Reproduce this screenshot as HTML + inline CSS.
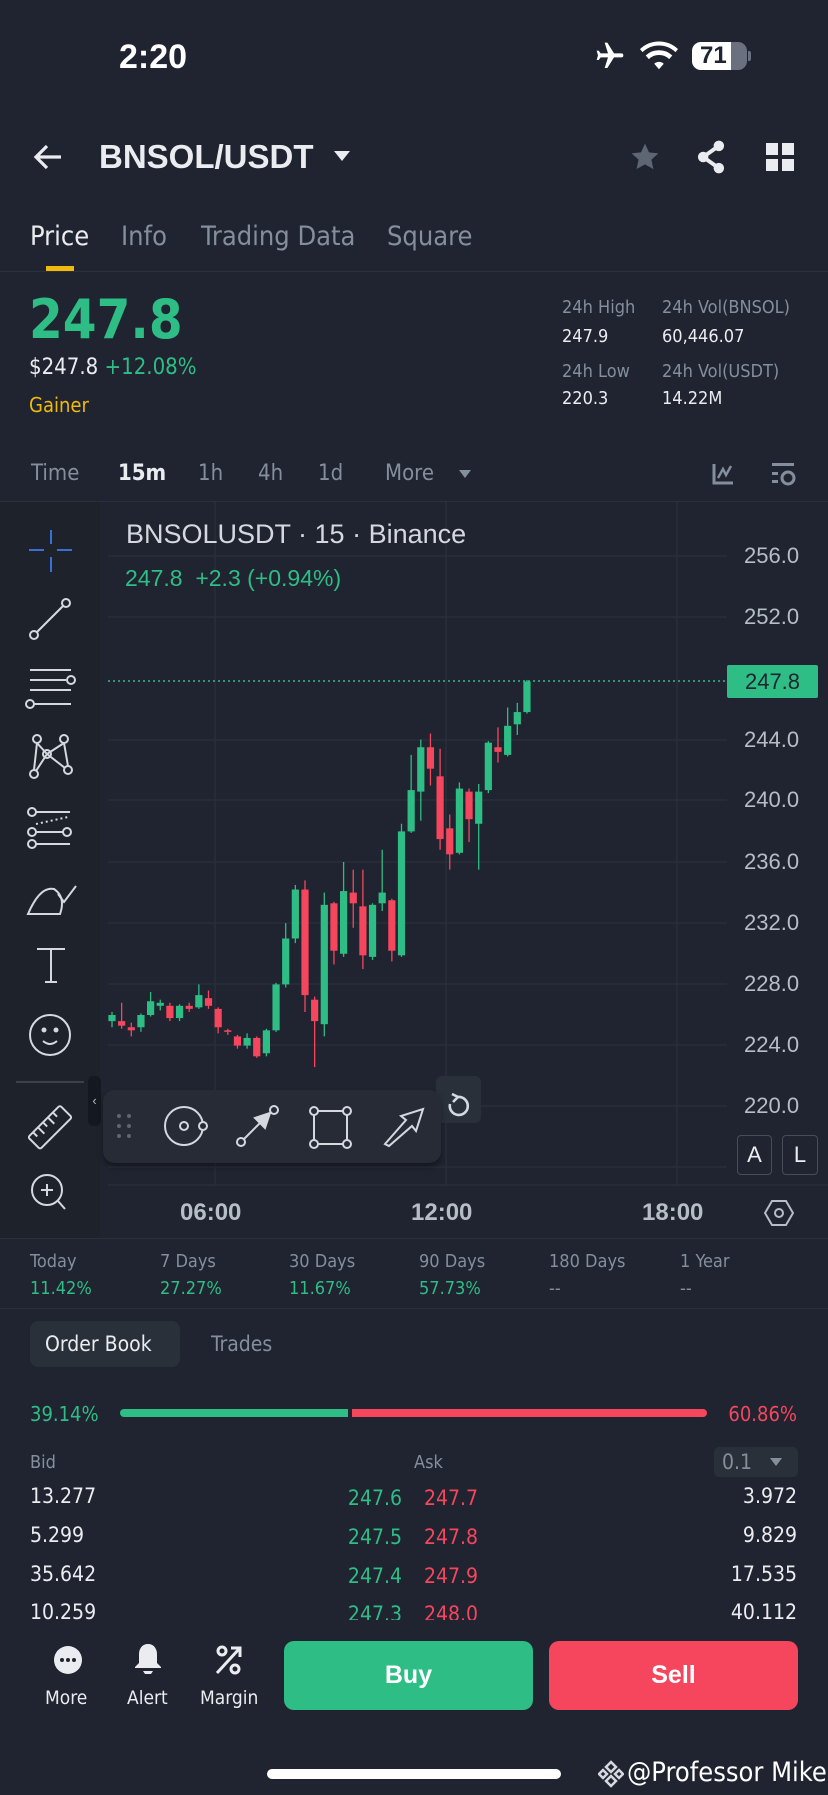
<!DOCTYPE html>
<html><head><meta charset="utf-8">
<style>
*{margin:0;padding:0;box-sizing:border-box}
body{width:828px;height:1795px;background:#1f2430;font-family:"Liberation Sans",sans-serif;color:#eaecef;position:relative;overflow:hidden}
.a{position:absolute;white-space:nowrap}
.g{color:#2ebd85}.r{color:#f6465d}.m{color:#848e9c}
.cond{font-family:"DejaVu Sans Condensed","Liberation Sans Narrow","Liberation Sans",sans-serif}
</style></head><body>
<!-- status -->
<div class="a" style="left:119px;top:38px;font-size:34px;font-weight:600;color:#fff">2:20</div>
<svg class="a" style="left:590px;top:40px" width="40" height="32" viewBox="0 0 24 24"><path fill="#fff" d="M21 16v-2l-8-5V3.5A1.5 1.5 0 0 0 11.5 2 1.5 1.5 0 0 0 10 3.5V9l-8 5v2l8-2.5V19l-2 1.5V22l3.5-1 3.5 1v-1.5L13 19v-5.5z" transform="rotate(90 12 12)"/></svg>
<svg class="a" style="left:640px;top:40px" width="38" height="30" viewBox="0 0 24 18"><path fill="#fff" d="M12 18l3-3.5a4.5 4.5 0 0 0-6 0zM12 9a9 9 0 0 1 6.4 2.6l2-2.3A12 12 0 0 0 12 6a12 12 0 0 0-8.4 3.3l2 2.3A9 9 0 0 1 12 9zM12 3a15 15 0 0 1 10.4 4.2l1.6-1.9A17.5 17.5 0 0 0 12 .5 17.5 17.5 0 0 0 0 5.3l1.6 1.9A15 15 0 0 1 12 3z"/></svg>
<div class="a" style="left:692px;top:42px;width:55px;height:28px;border-radius:9px;background:#6b7080;overflow:hidden"><div style="width:39px;height:28px;background:#fff"></div></div>
<div class="a" style="left:748px;top:51px;width:3px;height:10px;background:#6b7080;border-radius:0 2px 2px 0"></div>
<div class="a" style="left:700px;top:42px;font-size:24px;font-weight:700;color:#1f2430;line-height:28px">71</div>
<!-- header -->
<svg class="a" style="left:32px;top:142px" width="32" height="30" viewBox="0 0 32 30"><path d="M29 15H5M15 4L4 15l11 11" stroke="#eaecef" stroke-width="3.2" fill="none"/></svg>
<div class="a" style="left:99px;top:138px;font-size:33px;font-weight:700">BNSOL/USDT</div>
<div class="a" style="left:334px;top:151px;width:0;height:0;border-left:8px solid transparent;border-right:8px solid transparent;border-top:10px solid #eaecef"></div>
<svg class="a" style="left:629px;top:141px" width="32" height="32" viewBox="0 0 24 24"><path fill="#5e6673" d="M12 2l3 6.5 7 .8-5.2 4.8 1.5 7L12 17.5 5.7 21l1.5-7L2 9.3l7-.8z"/></svg>
<svg class="a" style="left:695px;top:140px" width="32" height="34" viewBox="0 0 24 26"><circle cx="18" cy="4.5" r="4" fill="#eaecef"/><circle cx="6" cy="13" r="4" fill="#eaecef"/><circle cx="18" cy="21.5" r="4" fill="#eaecef"/><path d="M18 4.5L6 13l12 8.5" stroke="#eaecef" stroke-width="3" fill="none"/></svg>
<svg class="a" style="left:766px;top:143px" width="28" height="28" viewBox="0 0 28 28"><g fill="#eaecef"><rect x="0" y="0" width="12" height="12"/><rect x="16" y="0" width="12" height="12"/><rect x="0" y="16" width="12" height="12"/><rect x="16" y="16" width="12" height="12"/></g></svg>
<!-- tabs -->
<div class="a cond" style="left:30px;top:221px;font-size:27px;color:#eaecef">Price</div>
<div class="a cond m" style="left:121px;top:221px;font-size:27px">Info</div>
<div class="a cond m" style="left:201px;top:221px;font-size:27px">Trading Data</div>
<div class="a cond m" style="left:387px;top:221px;font-size:27px">Square</div>
<div class="a" style="left:46px;top:266px;width:28px;height:5px;background:#f0b90b"></div>
<div class="a" style="left:0;top:271px;width:828px;height:1px;background:#2b313b"></div>
<!-- price -->
<div class="a cond g" style="left:29px;top:288px;font-size:54px;font-weight:700">247.8</div>
<div class="a cond" style="left:29px;top:355px;font-size:22px">$247.8 <span class="g">+12.08%</span></div>
<div class="a cond" style="left:29px;top:393px;font-size:20px;color:#f0b90b">Gainer</div>
<div class="a cond m" style="left:562px;top:297px;font-size:18px">24h High</div>
<div class="a cond" style="left:562px;top:326px;font-size:18px">247.9</div>
<div class="a cond m" style="left:562px;top:361px;font-size:18px">24h Low</div>
<div class="a cond" style="left:562px;top:388px;font-size:18px">220.3</div>
<div class="a cond m" style="left:662px;top:297px;font-size:18px">24h Vol(BNSOL)</div>
<div class="a cond" style="left:662px;top:326px;font-size:18px">60,446.07</div>
<div class="a cond m" style="left:662px;top:361px;font-size:18px">24h Vol(USDT)</div>
<div class="a cond" style="left:662px;top:388px;font-size:18px">14.22M</div>
<!-- intervals -->
<div class="a cond m" style="left:31px;top:461px;font-size:22px">Time</div>
<div class="a cond" style="left:118px;top:461px;font-size:22px;font-weight:700">15m</div>
<div class="a cond m" style="left:198px;top:461px;font-size:22px">1h</div>
<div class="a cond m" style="left:258px;top:461px;font-size:22px">4h</div>
<div class="a cond m" style="left:318px;top:461px;font-size:22px">1d</div>
<div class="a cond m" style="left:385px;top:461px;font-size:22px">More</div>
<div class="a" style="left:459px;top:470px;border-left:6px solid transparent;border-right:6px solid transparent;border-top:8px solid #848e9c"></div>
<svg class="a" style="left:712px;top:463px" width="22" height="22" viewBox="0 0 22 22"><path d="M2 1v19h19" stroke="#848e9c" stroke-width="3" fill="none"/><path d="M6 15l5-9 3 6 5-9" stroke="#848e9c" stroke-width="2.4" fill="none"/></svg>
<svg class="a" style="left:770px;top:463px" width="26" height="24" viewBox="0 0 26 24"><g fill="#848e9c"><rect x="2" y="0" width="22" height="3"/><rect x="2" y="9" width="6" height="3"/><rect x="2" y="17" width="6" height="3"/></g><circle cx="18" cy="15" r="6" stroke="#848e9c" stroke-width="3" fill="none"/></svg>
<div class="a" style="left:0;top:501px;width:828px;height:1px;background:#2b313b"></div>
<!-- chart -->
<div class="a" style="left:0;top:502px;width:100px;height:736px;background:#1d222b"></div>
<svg class="a" style="left:0;top:502px" width="828" height="736" id="ch">
<g stroke="#2b313b" stroke-width="1.2">
<line x1="215" y1="0" x2="215" y2="683"/><line x1="446" y1="0" x2="446" y2="683"/><line x1="677" y1="0" x2="677" y2="683"/>
<line x1="108" y1="54" x2="727" y2="54"/><line x1="108" y1="115" x2="727" y2="115"/><line x1="108" y1="238" x2="727" y2="238"/><line x1="108" y1="298" x2="727" y2="298"/><line x1="108" y1="360" x2="727" y2="360"/><line x1="108" y1="421" x2="727" y2="421"/><line x1="108" y1="482" x2="727" y2="482"/><line x1="108" y1="543" x2="727" y2="543"/><line x1="108" y1="604" x2="727" y2="604"/><line x1="108" y1="665" x2="727" y2="665"/>
<line x1="108" y1="683" x2="828" y2="683"/>
</g>
<line x1="108" y1="179" x2="727" y2="179" stroke="#2ebd85" stroke-width="1.5" stroke-dasharray="2 3"/>
<g id="cd"></g>
</svg>
<div class="a" style="left:126px;top:519px;font-size:27px;color:#d5d9df">BNSOLUSDT · 15 · Binance</div>
<div class="a g" style="left:125px;top:565px;font-size:23px">247.8&nbsp; +2.3 (+0.94%)</div>
<div class="a" style="left:744px;top:543px;font-size:22px;color:#b7bdc6;line-height:26px">256.0</div>
<div class="a" style="left:744px;top:604px;font-size:22px;color:#b7bdc6;line-height:26px">252.0</div>
<div class="a" style="left:744px;top:727px;font-size:22px;color:#b7bdc6;line-height:26px">244.0</div>
<div class="a" style="left:744px;top:787px;font-size:22px;color:#b7bdc6;line-height:26px">240.0</div>
<div class="a" style="left:744px;top:849px;font-size:22px;color:#b7bdc6;line-height:26px">236.0</div>
<div class="a" style="left:744px;top:910px;font-size:22px;color:#b7bdc6;line-height:26px">232.0</div>
<div class="a" style="left:744px;top:971px;font-size:22px;color:#b7bdc6;line-height:26px">228.0</div>
<div class="a" style="left:744px;top:1032px;font-size:22px;color:#b7bdc6;line-height:26px">224.0</div>
<div class="a" style="left:744px;top:1093px;font-size:22px;color:#b7bdc6;line-height:26px">220.0</div>
<div class="a" style="left:727px;top:665px;width:91px;height:33px;background:#2ebd85;border-radius:2px;font-size:22px;color:#1f2430;line-height:33px;text-align:center">247.8</div>
<div class="a" style="left:737px;top:1135px;width:35px;height:40px;border:1px solid #474d57;border-radius:4px;font-size:22px;color:#eaecef;line-height:38px;text-align:center">A</div>
<div class="a" style="left:782px;top:1135px;width:36px;height:40px;border:1px solid #474d57;border-radius:4px;font-size:22px;color:#eaecef;line-height:38px;text-align:center">L</div>
<!-- left tools -->
<svg class="a" style="left:0;top:502px" width="100" height="736" fill="none" stroke="#d5d9df" stroke-width="2">
<g stroke="#3b6fd8"><line x1="29" y1="48" x2="44" y2="48"/><line x1="57" y1="48" x2="72" y2="48"/><line x1="51" y1="28" x2="51" y2="42"/><line x1="51" y1="55" x2="51" y2="70"/></g>
<circle cx="34" cy="133" r="4"/><circle cx="66" cy="101" r="4"/><line x1="37" y1="130" x2="63" y2="104"/>
<line x1="30" y1="168" x2="71" y2="168"/><line x1="30" y1="178" x2="66" y2="178"/><circle cx="71" cy="178" r="4"/><line x1="30" y1="188" x2="71" y2="188"/><line x1="34" y1="202" x2="71" y2="202"/><circle cx="30" cy="202" r="4"/>
<circle cx="37" cy="237" r="4"/><circle cx="64" cy="237" r="4"/><circle cx="47" cy="252" r="4"/><circle cx="34" cy="272" r="4"/><circle cx="68" cy="268" r="4"/><path d="M37 241L34 268M37 241L47 252M47 252L64 241M64 241L68 264M47 252L36 269M47 252L65 266"/>
<circle cx="32" cy="310" r="4"/><line x1="36" y1="310" x2="70" y2="310"/><path d="M36 322L68 315" stroke-dasharray="2 3"/><circle cx="32" cy="330" r="4"/><circle cx="67" cy="330" r="4"/><line x1="36" y1="330" x2="63" y2="330"/><circle cx="32" cy="342" r="4"/><line x1="36" y1="342" x2="70" y2="342"/>
<path d="M28 412L60 412Q66 395 54 387Q40 384 28 412Z"/><path d="M58 392L64 400L76 384"/>
<path d="M37 447H65M51 447V480M45 480H57"/>
<circle cx="50" cy="533" r="20"/><circle cx="44" cy="528" r="1.5" fill="#d5d9df"/><circle cx="56" cy="528" r="1.5" fill="#d5d9df"/><path d="M43 539Q50 545 57 539"/>
<line x1="16" y1="580" x2="84" y2="580" stroke="#3b414b"/>
<g transform="rotate(-45 50 626)"><rect x="28" y="617" width="45" height="17" rx="2"/><path d="M35 617v6M42 617v9M49 617v6M56 617v9M63 617v6"/></g>
<circle cx="47" cy="688" r="15"/><path d="M41 688h12M47 682v12M58 699l7 8"/>
</svg>
<!-- drawing popup -->
<div class="a" style="left:88px;top:1076px;width:13px;height:50px;background:#141820;border-radius:6px;color:#b7bdc6;font-size:13px;line-height:50px;text-align:center">‹</div>
<div class="a" style="left:436px;top:1076px;width:45px;height:47px;background:#2a303a;border-radius:6px"></div>
<div class="a" style="left:103px;top:1090px;width:338px;height:73px;background:#262b35;border-radius:12px;box-shadow:0 4px 6px rgba(0,0,0,.35)"></div>
<svg class="a" style="left:103px;top:1076px" width="380" height="90" fill="none" stroke="#d5d9df" stroke-width="2">
<g fill="#5e6673" stroke="none"><circle cx="16" cy="40" r="2"/><circle cx="26" cy="40" r="2"/><circle cx="16" cy="50" r="2"/><circle cx="26" cy="50" r="2"/><circle cx="16" cy="60" r="2"/><circle cx="26" cy="60" r="2"/></g>
<circle cx="81" cy="50" r="19"/><circle cx="81" cy="50" r="4"/><circle cx="100" cy="50" r="4" fill="#262b35"/>
<circle cx="138" cy="66" r="4"/><circle cx="171" cy="34" r="4"/><line x1="141" y1="63" x2="164" y2="40"/><path d="M152 42L167 37L162 52Z" fill="#d5d9df"/>
<rect x="211" y="35" width="33" height="33"/><circle cx="211" cy="35" r="4" fill="#262b35"/><circle cx="244" cy="35" r="4" fill="#262b35"/><circle cx="211" cy="68" r="4" fill="#262b35"/><circle cx="244" cy="68" r="4" fill="#262b35"/>
<path d="M282 68L303 44L298 40L320 33L313 55L309 50L286 70Z"/>
<path d="M355 21A9 9 0 1 1 347 28" stroke-width="2.6"/><path d="M349 18L355 21L350 26" stroke-width="2.6"/>
</svg>
<!-- time axis -->
<div class="a" style="left:180px;top:1199px;font-size:24px;font-weight:700;color:#b7bdc6">06:00</div>
<div class="a" style="left:411px;top:1199px;font-size:24px;font-weight:700;color:#b7bdc6">12:00</div>
<div class="a" style="left:642px;top:1199px;font-size:24px;font-weight:700;color:#b7bdc6">18:00</div>
<svg class="a" style="left:764px;top:1199px" width="30" height="28" viewBox="0 0 30 28" fill="none" stroke="#b7bdc6" stroke-width="2"><path d="M8 2h14l7 12-7 12H8L1 14z"/><circle cx="15" cy="14" r="4"/></svg>
<div class="a" style="left:0;top:1238px;width:828px;height:1px;background:#2b313b"></div>
<!-- performance -->
<div class="a cond m" style="left:30px;top:1251px;font-size:18px">Today</div>
<div class="a cond g" style="left:30px;top:1278px;font-size:18px">11.42%</div>
<div class="a cond m" style="left:160px;top:1251px;font-size:18px">7 Days</div>
<div class="a cond g" style="left:160px;top:1278px;font-size:18px">27.27%</div>
<div class="a cond m" style="left:289px;top:1251px;font-size:18px">30 Days</div>
<div class="a cond g" style="left:289px;top:1278px;font-size:18px">11.67%</div>
<div class="a cond m" style="left:419px;top:1251px;font-size:18px">90 Days</div>
<div class="a cond g" style="left:419px;top:1278px;font-size:18px">57.73%</div>
<div class="a cond m" style="left:549px;top:1251px;font-size:18px">180 Days</div>
<div class="a cond m" style="left:549px;top:1278px;font-size:18px">--</div>
<div class="a cond m" style="left:680px;top:1251px;font-size:18px">1 Year</div>
<div class="a cond m" style="left:680px;top:1278px;font-size:18px">--</div>
<div class="a" style="left:0;top:1308px;width:828px;height:1px;background:#2b313b"></div>
<!-- order book -->
<div class="a" style="left:30px;top:1321px;width:150px;height:46px;background:#2a303a;border-radius:8px"></div>
<div class="a cond" style="left:45px;top:1332px;font-size:21px">Order Book</div>
<div class="a cond m" style="left:211px;top:1332px;font-size:21px">Trades</div>
<div class="a cond g" style="left:30px;top:1402px;font-size:20px">39.14%</div>
<div class="a" style="left:120px;top:1409px;width:228px;height:8px;background:#2ebd85;border-radius:4px 0 0 4px"></div>
<div class="a" style="left:352px;top:1409px;width:355px;height:8px;background:#f6465d;border-radius:0 4px 4px 0"></div>
<div class="a cond r" style="right:31px;top:1402px;font-size:20px">60.86%</div>
<div class="a cond m" style="left:30px;top:1452px;font-size:18px">Bid</div>
<div class="a cond m" style="left:414px;top:1452px;font-size:18px">Ask</div>
<div class="a" style="left:714px;top:1447px;width:84px;height:30px;background:#2a303a;border-radius:5px"></div>
<div class="a cond m" style="left:722px;top:1450px;font-size:21px">0.1</div>
<div class="a" style="left:770px;top:1458px;border-left:6px solid transparent;border-right:6px solid transparent;border-top:8px solid #848e9c"></div>
<div class="a cond" style="left:30px;top:1484px;font-size:21px">13.277</div>
<div class="a cond" style="left:30px;top:1523px;font-size:21px">5.299</div>
<div class="a cond" style="left:30px;top:1562px;font-size:21px">35.642</div>
<div class="a cond" style="left:30px;top:1600px;font-size:21px">10.259</div>
<div class="a" style="left:0;top:1484px;width:828px;height:136px;overflow:hidden">
<div class="a cond g" style="right:426px;top:2px;font-size:21px">247.6</div>
<div class="a cond g" style="right:426px;top:41px;font-size:21px">247.5</div>
<div class="a cond g" style="right:426px;top:80px;font-size:21px">247.4</div>
<div class="a cond g" style="right:426px;top:118px;font-size:21px">247.3</div>
<div class="a cond r" style="left:424px;top:2px;font-size:21px">247.7</div>
<div class="a cond r" style="left:424px;top:41px;font-size:21px">247.8</div>
<div class="a cond r" style="left:424px;top:80px;font-size:21px">247.9</div>
<div class="a cond r" style="left:424px;top:118px;font-size:21px">248.0</div>
</div>
<div class="a cond" style="right:31px;top:1484px;font-size:21px">3.972</div>
<div class="a cond" style="right:31px;top:1523px;font-size:21px">9.829</div>
<div class="a cond" style="right:31px;top:1562px;font-size:21px">17.535</div>
<div class="a cond" style="right:31px;top:1600px;font-size:21px">40.112</div>
<!-- bottom bar -->
<div class="a" style="left:0;top:1622px;width:828px;height:173px;background:#1f2430"></div>
<svg class="a" style="left:53px;top:1645px" width="30" height="30" viewBox="0 0 30 30"><circle cx="15" cy="15" r="14" fill="#eaecef"/><g fill="#1f2430"><circle cx="9" cy="15" r="2"/><circle cx="15" cy="15" r="2"/><circle cx="21" cy="15" r="2"/></g></svg>
<svg class="a" style="left:133px;top:1643px" width="30" height="34" viewBox="0 0 30 34"><path fill="#eaecef" d="M15 1c-6 0-9 5-9 10v9l-4 4v1h26v-1l-4-4v-9c0-5-3-10-9-10zM10 28h10l-2 3h-6z"/></svg>
<svg class="a" style="left:214px;top:1643px" width="30" height="34" viewBox="0 0 30 34" fill="none" stroke="#eaecef" stroke-width="3"><path d="M3 30L25 6M17 5h9v9"/><circle cx="8" cy="8" r="4"/><circle cx="21" cy="26" r="4"/></svg>
<div class="a cond" style="left:45px;top:1687px;font-size:19px">More</div>
<div class="a cond" style="left:127px;top:1687px;font-size:19px">Alert</div>
<div class="a cond" style="left:200px;top:1687px;font-size:19px">Margin</div>
<div class="a" style="left:284px;top:1641px;width:249px;height:69px;background:#2ebd85;border-radius:10px;font-size:25px;font-weight:700;color:#fff;text-align:center;line-height:69px">Buy</div>
<div class="a" style="left:549px;top:1641px;width:249px;height:69px;background:#f6465d;border-radius:10px;font-size:25px;font-weight:700;color:#fff;text-align:center;line-height:69px">Sell</div>
<div class="a" style="left:267px;top:1769px;width:294px;height:10px;background:#fff;border-radius:5px"></div>
<svg class="a" style="left:598px;top:1760px" width="26" height="28" viewBox="0 0 26 28" fill="none" stroke="#d5d9df" stroke-width="2.5"><path d="M13 2l5 5-5 5-5-5zM13 16l5 5-5 5-5-5zM5 10l4 4-4 4-4-4zM21 10l4 4-4 4-4-4z"/></svg>
<div class="a cond" style="left:627px;top:1757px;font-size:27px;color:#fff">@Professor Mike</div>
<script>
var d=[[225.6,226.0,226.2,225.2],[225.6,225.3,226.8,225.1],[225.2,225.0,225.5,224.6],[225.2,226.0,226.1,224.9],[226.0,226.9,227.5,225.9],[226.6,226.8,227.0,226.3],[226.6,225.8,226.8,225.6],[225.8,226.6,226.7,225.6],[226.6,226.4,226.8,226.2],[226.5,227.3,228.0,226.4],[227.1,226.6,227.6,226.4],[226.4,225.2,226.5,224.8],[225.0,224.9,225.1,224.7],[224.6,224.0,224.7,223.8],[224.0,224.5,224.8,223.8],[224.5,223.3,224.6,223.2],[223.5,225.0,225.1,223.3],[225.0,228.0,228.1,224.9],[228.0,231.0,232.0,227.8],[231.0,234.2,234.5,230.7],[234.2,227.3,234.8,226.2],[227.0,225.6,227.2,222.6],[225.4,233.2,234.0,224.6],[233.3,230.2,233.4,229.3],[230.0,234.1,236.0,229.8],[234.0,233.3,235.5,231.7],[233.1,229.9,235.5,229.0],[229.8,233.2,233.3,229.6],[233.3,234.0,236.8,232.8],[233.5,230.2,233.6,229.5],[229.9,238.0,238.5,229.8],[238.0,240.7,243.0,237.9],[240.6,243.5,244.0,238.7],[243.5,242.1,244.4,241.0],[241.6,237.5,243.4,236.8],[238.2,236.5,239.1,235.5],[236.6,240.8,241.2,236.5],[240.6,238.8,240.8,237.3],[238.5,240.6,241.1,235.5],[240.7,243.8,243.9,240.5],[243.5,243.2,244.8,242.5],[243.0,244.9,246.1,242.9],[245.0,245.8,246.4,244.3],[245.8,247.8,247.9,245.7]];
function Y(p){return 54+(256-p)*15.3;}
var s='';d.forEach(function(c,i){var x=112+i*9.65,col=c[1]>=c[0]?'#2ebd85':'#f6465d';var t=Y(Math.max(c[0],c[1])),b=Y(Math.min(c[0],c[1]));if(b-t<1.5)b=t+1.5;
s+='<line x1="'+x+'" x2="'+x+'" y1="'+Y(c[2])+'" y2="'+Y(c[3])+'" stroke="'+col+'" stroke-width="1.3"/><rect x="'+(x-3.6)+'" y="'+t+'" width="7.2" height="'+(b-t)+'" fill="'+col+'"/>';});
document.getElementById('cd').innerHTML=s;
</script>
</body></html>
